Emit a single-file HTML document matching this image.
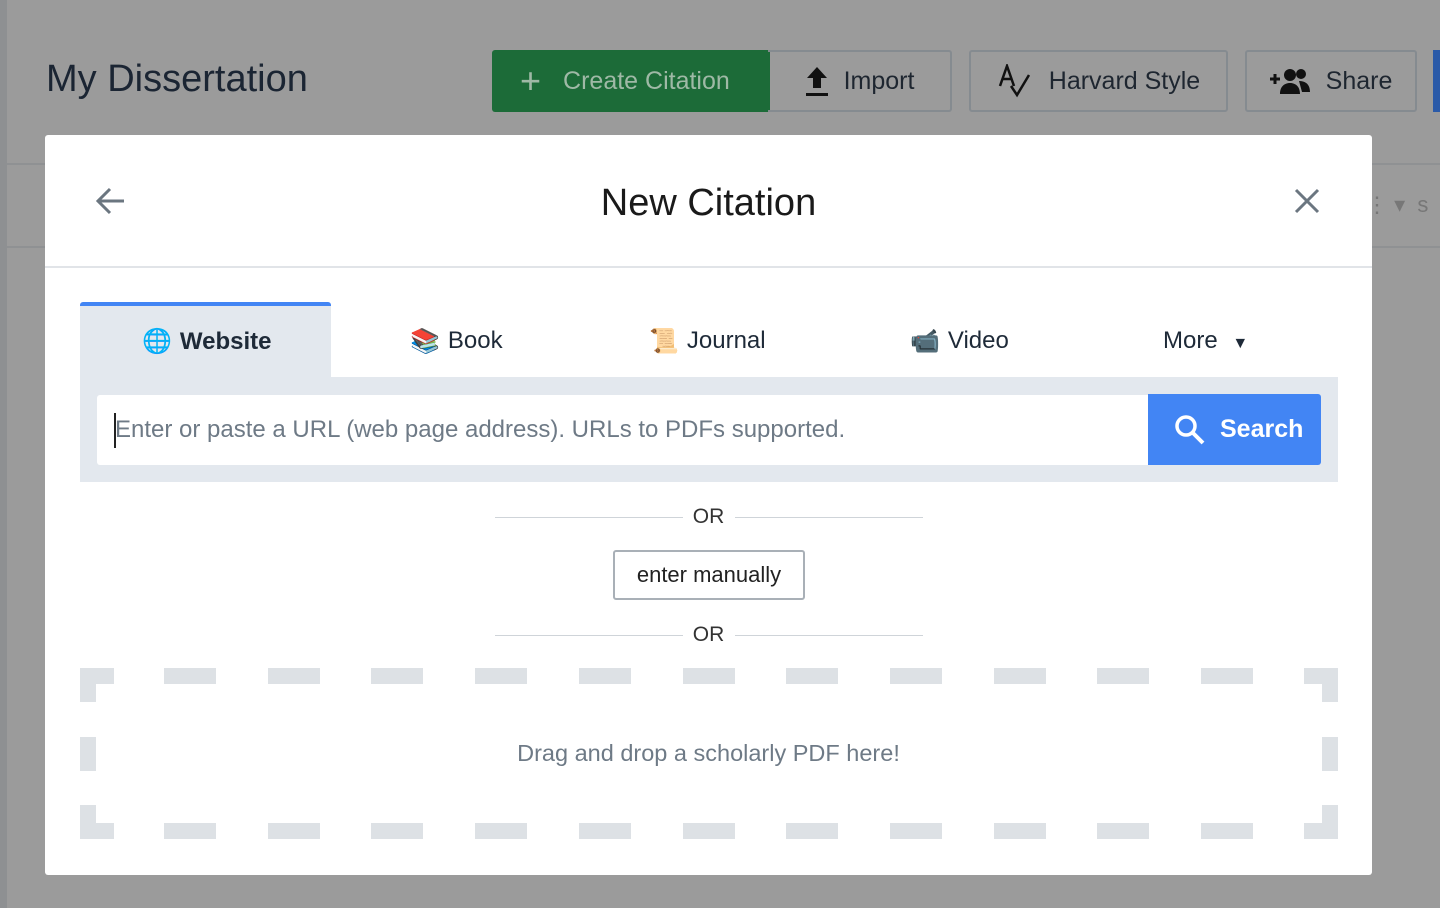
<!DOCTYPE html>
<html><head><style>
*{box-sizing:border-box;margin:0;padding:0}
body{width:1440px;height:908px;overflow:hidden;background:#9b9b9b;font-family:"Liberation Sans",sans-serif;position:relative}
.abs{position:absolute}
.btn{position:absolute;top:50px;height:62px;border:2px solid #858b90;border-radius:3px;display:flex;align-items:center;justify-content:center;font-size:25px;color:#1e2630;gap:14px}
.dash{position:absolute;background:#dde1e5}
</style></head><body>
<div class="abs" style="left:0;top:0;width:7px;height:908px;background:#8e9092"></div>
<div class="abs" style="left:7px;top:163px;width:1433px;height:2px;background:#8f9193"></div>
<div class="abs" style="left:7px;top:246px;width:1433px;height:2px;background:#8f9193"></div>
<div class="abs" style="left:46px;top:58px;font-size:38px;color:#1b2533">My Dissertation</div>
<div class="abs" style="left:492px;top:50px;width:278px;height:62px;background:#1c6b38;border-radius:3px 0 0 3px;color:#9fb9a6;font-size:25px;display:flex;align-items:center;padding-left:28px;gap:22px"><span style="font-size:36px;font-weight:300">+</span>Create Citation</div>
<div class="btn" style="left:768px;width:184px;border-left:none;border-radius:0 3px 3px 0"><svg width="26" height="32" viewBox="0 0 26 32"><path d="M13 2L3 13h6v10h8V13h6z M2 28h22v3H2z" fill="#111"/></svg>Import</div>
<div class="btn" style="left:969px;width:259px"><svg width="38" height="34" viewBox="0 0 38 34"><path d="M3 22L10 2l7 20M5.5 15h9M14 22l6 9 12-20" stroke="#111" stroke-width="2.5" fill="none"/></svg>Harvard Style</div>
<div class="btn" style="left:1245px;width:172px"><svg width="42" height="26" viewBox="0 0 42 26"><path d="M0 11h10M5 6v10" stroke="#111" stroke-width="3"/><circle cx="20" cy="7" r="6" fill="#111"/><circle cx="31" cy="6" r="5" fill="#111"/><path d="M10 26c0-8 5-11 10-11s10 3 10 11zM29 13c5 0 11 2 11 11h-8z" fill="#111"/></svg>Share</div>
<div class="abs" style="left:1433px;top:50px;width:7px;height:62px;background:#2a5aa8"></div>
<div class="abs" style="left:1366px;top:192px;font-size:22px;color:#777;white-space:nowrap">⋮ ▾ &nbsp;s</div>

<div class="abs" style="left:45px;top:135px;width:1327px;height:740px;background:#fff;border-radius:3px">
 <svg class="abs" style="left:50px;top:52px" width="32" height="28" viewBox="0 0 32 28"><path d="M29 14H4M15 2L3 14l12 12" stroke="#6b7680" stroke-width="3" fill="none"/></svg>
 <div class="abs" style="left:0;width:1327px;top:47px;text-align:center;font-size:38px;color:#1a1a1a">New Citation</div>
 <svg class="abs" style="left:1249px;top:53px" width="26" height="26" viewBox="0 0 26 26"><path d="M2 2l22 22M24 2L2 24" stroke="#6b7680" stroke-width="3"/></svg>
 <div class="abs" style="left:0;top:131px;width:1327px;height:2px;background:#e1e4e8"></div>
 <div class="abs" style="left:35px;top:167px;width:251px;height:80px;background:#e3e8ee;border-top:4px solid #4285f4;border-radius:3px 3px 0 0"></div>
 <div class="abs" style="left:35px;top:242px;width:1258px;height:105px;background:#e3e8ee"></div>
 <div class="abs" style="top:192px;left:97px;font-size:24px;color:#1e2a38;font-weight:bold;display:flex;gap:8px;align-items:center"><span style="font-size:24px;color:#4aa8d8">🌐</span>Website</div>
 <div class="abs" style="top:192px;left:365px;font-size:24px;color:#1e2a38;display:flex;gap:8px"><span>📚</span>Book</div>
 <div class="abs" style="top:192px;left:604px;font-size:24px;color:#1e2a38;display:flex;gap:8px"><span>📜</span>Journal</div>
 <div class="abs" style="top:192px;left:865px;font-size:24px;color:#1e2a38;display:flex;gap:8px"><span>📹</span>Video</div>
 <div class="abs" style="top:192px;left:1118px;font-size:24px;color:#1e2a38">More <span style="font-size:16px;margin-left:8px">▼</span></div>
 <div class="abs" style="left:52px;top:260px;width:1051px;height:70px;background:#fff;border-radius:3px 0 0 3px"></div>
 <div class="abs" style="left:69px;top:278px;width:2px;height:35px;background:#222"></div>
 <div class="abs" style="left:70px;top:281px;font-size:24px;color:#6e7a86">Enter or paste a URL (web page address). URLs to PDFs supported.</div>
 <div class="abs" style="left:1103px;top:259px;width:173px;height:71px;background:#4285f4;border-radius:0 3px 3px 0;color:#fff;font-size:25px;font-weight:bold;display:flex;align-items:center;padding-left:26px;gap:14px"><svg width="32" height="32" viewBox="0 0 32 32"><circle cx="12" cy="12" r="9" stroke="#fff" stroke-width="3.5" fill="none"/><path d="M19 19l10 10" stroke="#fff" stroke-width="4"/></svg>Search</div>
 <div class="abs" style="left:450px;top:382px;width:188px;height:1px;background:#cfd4d9"></div>
 <div class="abs" style="left:690px;top:382px;width:188px;height:1px;background:#cfd4d9"></div>
 <div class="abs" style="left:0;width:1327px;top:370px;text-align:center;font-size:21px;color:#333">OR</div>
 <div class="abs" style="left:568px;top:415px;width:192px;height:50px;border:2px solid #a9b0b7;border-radius:3px;font-size:22px;color:#222;text-align:center;line-height:46px">enter manually</div>
 <div class="abs" style="left:450px;top:500px;width:188px;height:1px;background:#cfd4d9"></div>
 <div class="abs" style="left:690px;top:500px;width:188px;height:1px;background:#cfd4d9"></div>
 <div class="abs" style="left:0;width:1327px;top:488px;text-align:center;font-size:21px;color:#333">OR</div>
 <div class="abs" style="left:0;width:1327px;top:605px;text-align:center;font-size:23.5px;color:#6e7a86">Drag and drop a scholarly PDF here!</div>
</div>
<div id="d"></div>
<script>
var h='';
for(var i=0;i<11;i++){var x=Math.round(164+i*103.7);h+='<div class="dash" style="left:'+x+'px;top:668px;width:52px;height:16px"></div><div class="dash" style="left:'+x+'px;top:823px;width:52px;height:16px"></div>';}
h+='<div class="dash" style="left:80px;top:668px;width:34px;height:16px"></div><div class="dash" style="left:80px;top:668px;width:16px;height:34px"></div>';
h+='<div class="dash" style="left:1304px;top:668px;width:34px;height:16px"></div><div class="dash" style="left:1322px;top:668px;width:16px;height:34px"></div>';
h+='<div class="dash" style="left:80px;top:823px;width:34px;height:16px"></div><div class="dash" style="left:80px;top:805px;width:16px;height:34px"></div>';
h+='<div class="dash" style="left:1304px;top:823px;width:34px;height:16px"></div><div class="dash" style="left:1322px;top:805px;width:16px;height:34px"></div>';
h+='<div class="dash" style="left:80px;top:737px;width:16px;height:34px"></div><div class="dash" style="left:1322px;top:737px;width:16px;height:34px"></div>';
document.getElementById('d').innerHTML=h;
</script>
</body></html>
